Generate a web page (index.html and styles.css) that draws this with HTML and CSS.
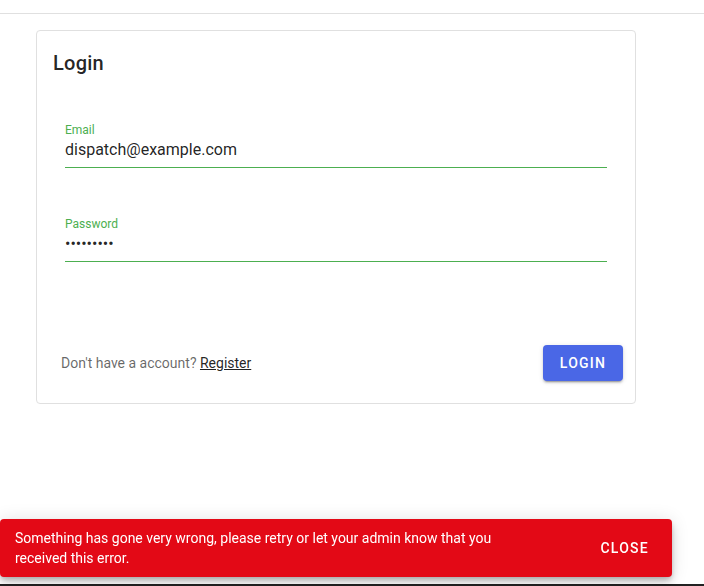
FILE: index.html
```html
<!DOCTYPE html>
<html lang="en">
<head>
<meta charset="utf-8">
<title>Login</title>
<link rel="stylesheet" href="styles.css">
</head>
<body>
<div class="page">
  <header class="topbar"></header>
  <main class="main">
    <section class="card">
      <h2 class="card-title">Login</h2>
      <form class="form">
        <div class="field">
          <label class="field-label">Email</label>
          <div class="field-input">dispatch@example.com</div>
        </div>
        <div class="field">
          <label class="field-label">Password</label>
          <div class="field-input password">•••••••••</div>
        </div>
      </form>
      <div class="actions">
        <span class="hint">Don't have a account? <a class="link" href="#">Register</a></span>
        <button class="btn-login" type="button">Login</button>
      </div>
    </section>
  </main>
  <div class="bottom-bar"></div>
</div>
<div class="snackbar">
  <div class="snackbar-text">Something has gone very wrong, please retry or let your admin know that you received this error.</div>
  <button class="snackbar-btn" type="button">Close</button>
</div>
</body>
</html>
```

FILE: styles.css
```css
* { box-sizing: border-box; }
html, body { margin: 0; padding: 0; }
body {
  font-family: Roboto, "Liberation Sans", sans-serif;
  color: rgba(0,0,0,.87);
  background: #fff;
}
.page {
  min-height: 100vh;
  display: flex;
  flex-direction: column;
}
.topbar {
  height: 14px;
  border-bottom: 1px solid #e0e0e0;
}
.main {
  flex: 1;
  padding: 16px 0 0 36px;
}
.card {
  width: 600px;
  border: 1px solid #e0e0e0;
  border-radius: 4px;
  background: #fff;
}
.card-title {
  margin: 0;
  padding: 16px;
  font-size: 20px;
  line-height: 32px;
  font-weight: 500;
  letter-spacing: .0125em;
  color: rgba(0,0,0,.87);
}
.form {
  padding: 27px 28px 0;
  display: flex;
  flex-direction: column;
  gap: 48px;
}
.field {
  display: flex;
  flex-direction: column;
  gap: 2px;
}
.field-label {
  font-size: 12px;
  line-height: 16px;
  color: #4caf50;
}
.field-input {
  font-size: 16px;
  line-height: 20px;
  padding-bottom: 7px;
  border-bottom: 1px solid #4caf50;
  color: rgba(0,0,0,.87);
}
.password {
  letter-spacing: 0;
}
.actions {
  margin-top: 83px;
  padding: 0 12px 22px 24px;
  display: flex;
  align-items: center;
  justify-content: space-between;
}
.hint {
  font-size: 14px;
  color: rgba(0,0,0,.6);
}
.link {
  color: rgba(0,0,0,.87);
  text-decoration: underline;
}
.btn-login {
  height: 36px;
  min-width: 80px;
  padding: 0 16px;
  border: none;
  border-radius: 4px;
  background: #4a67e6;
  color: #fff;
  font-family: Roboto, "Liberation Sans", sans-serif;
  font-size: 14px;
  font-weight: 500;
  letter-spacing: .0892857143em;
  text-transform: uppercase;
  box-shadow: 0 3px 1px -2px rgba(0,0,0,.2), 0 2px 2px 0 rgba(0,0,0,.14), 0 1px 5px 0 rgba(0,0,0,.12);
}
.bottom-bar {
  height: 2px;
  background: #222;
}
.snackbar {
  position: fixed;
  left: 0;
  bottom: 9px;
  width: 672px;
  min-height: 58px;
  display: flex;
  align-items: center;
  background: #e30916;
  border-radius: 4px;
  color: #fff;
  box-shadow: 0 3px 5px -1px rgba(0,0,0,.2), 0 6px 10px 0 rgba(0,0,0,.14), 0 1px 18px 0 rgba(0,0,0,.12);
}
.snackbar-text {
  flex: 1;
  max-width: 530px;
  padding: 9px 16px 9px 15px;
  font-size: 14px;
  line-height: 20px;
}
.snackbar-btn {
  margin-left: auto;
  margin-right: 7px;
  height: 36px;
  padding: 0 16px;
  border: none;
  background: transparent;
  color: #fff;
  font-family: Roboto, "Liberation Sans", sans-serif;
  font-size: 14px;
  font-weight: 500;
  letter-spacing: .0892857143em;
  text-transform: uppercase;
}
```
